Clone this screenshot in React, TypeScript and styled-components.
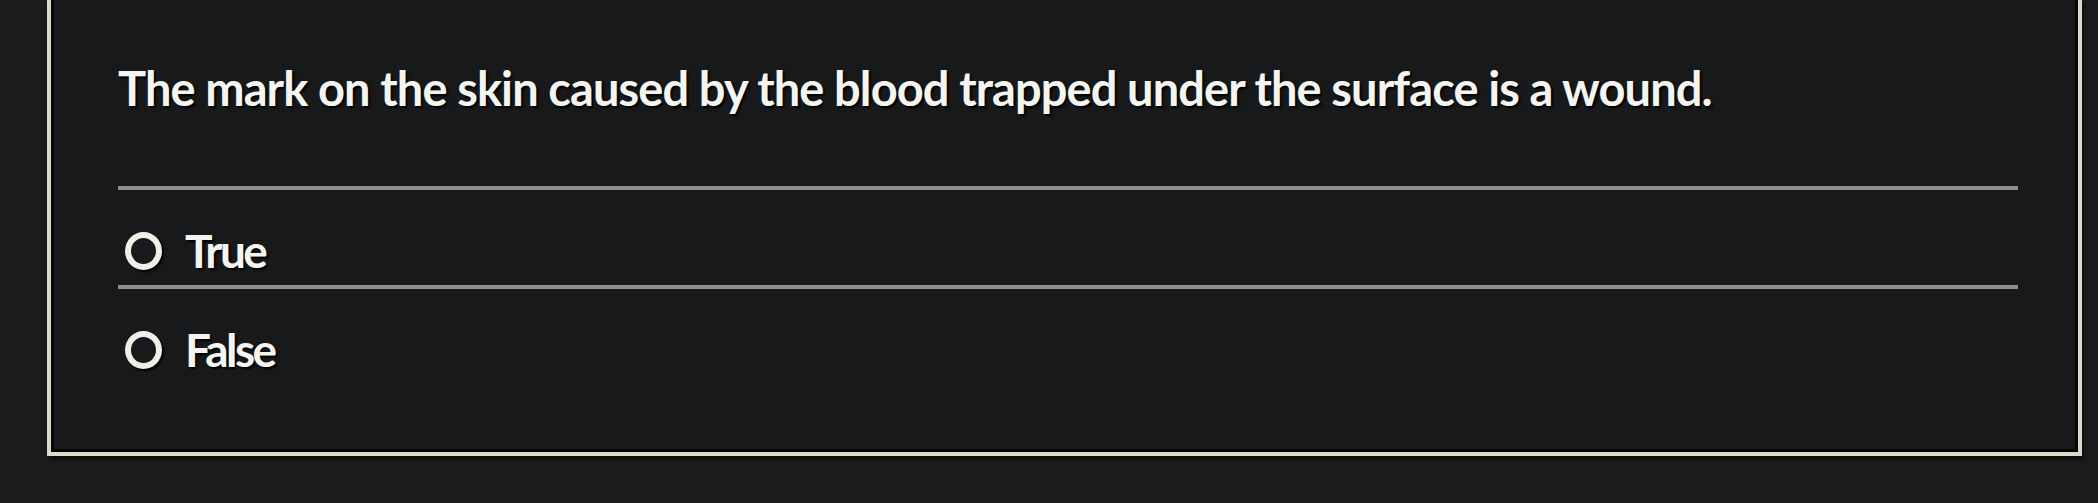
import styled, { createGlobalStyle } from 'styled-components';

const GlobalStyle = createGlobalStyle`
    html, body {
        margin: 0;
        padding: 0;
        background-color: #1c1c1d;
    }
    body {
        font-family: 'Lato', 'Open Sans', sans-serif;
        overflow: hidden;
    }
`;

const Page = styled.div`
    width: 2098px;
    height: 503px;
    padding-left: 47px;
    box-sizing: border-box;
`;

const Panel = styled.div`
    width: 2035px;
    height: 456px;
    box-sizing: border-box;
    background-color: #18191b;
    border: 4px solid #dcd9cb;
    border-top: none;
    box-shadow: inset 3px -3px 0 #060607, inset -3px 0 0 #060607,
        2px 3px 4px rgba(0, 0, 0, 0.6);
    padding: 58px 60px 0 67px;
`;

const Question = styled.h1`
    margin: 0;
    font-family: 'Lato', sans-serif;
    font-weight: 700;
    font-size: 47px;
    line-height: 60px;
    letter-spacing: -0.9px;
    color: #f4f4f0;
    text-shadow: 2px 2px 2px rgba(0, 0, 0, 0.9);
`;

const Options = styled.div`
    margin-top: 68px;
    display: flex;
    flex-direction: column;
`;

const OptionRow = styled.label`
    display: flex;
    align-items: center;
    gap: 23px;
    padding: 42px 0 15px 7px;
    border-top: 4px solid #8e8d86;
    color: #f4f4f0;
    cursor: pointer;
`;

const Radio = styled.span`
    width: 37px;
    height: 38px;
    box-sizing: border-box;
    border: 6px solid #efefe8;
    border-radius: 50%;
    box-shadow: 2px 2px 2px rgba(0, 0, 0, 0.9);
`;

const Label = styled.span`
    font-family: 'Lato', sans-serif;
    font-weight: 700;
    font-size: 46px;
    line-height: 38px;
    letter-spacing: -2.6px;
    text-shadow: 2px 2px 2px rgba(0, 0, 0, 0.9);
`;

const answers = ['True', 'False'];

export default function App() {
    return (
        <>
            <GlobalStyle />
            <Page>
                <Panel>
                    <Question>
                        The mark on the skin caused by the blood trapped under
                        the surface is a wound.
                    </Question>
                    <Options>
                        {answers.map((answer) => (
                            <OptionRow key={answer}>
                                <Radio />
                                <Label>{answer}</Label>
                            </OptionRow>
                        ))}
                    </Options>
                </Panel>
            </Page>
        </>
    );
}
